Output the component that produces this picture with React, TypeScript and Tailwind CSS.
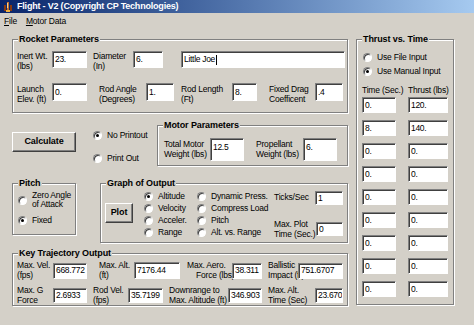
import React from "react";

const inputCls =
  "bg-white border border-t-[#808080] border-l-[#808080] border-r-white border-b-white shadow-[inset_1px_1px_0_#404040] flex pl-[2px] text-[8.5px] tracking-[-0.3px] text-black overflow-hidden whitespace-nowrap shrink-0";

function Input({ className = "", value, top = false }: { className?: string; value: React.ReactNode; top?: boolean }) {
  return <div className={`${inputCls} ${top ? "items-start pt-[2px]" : "items-center"} ${className}`}>{value}</div>;
}

function Radio({ checked = false }: { checked?: boolean }) {
  return (
    <span className="w-[9px] h-[9px] rounded-full bg-white border border-t-[#808080] border-l-[#808080] border-r-white border-b-white shadow-[inset_1px_1px_0_#404040] flex items-center justify-center shrink-0">
      {checked && <span className="w-[3px] h-[3px] rounded-full bg-black" />}
    </span>
  );
}

function RadioItem({ checked = false, children, className = "" }: { checked?: boolean; children: React.ReactNode; className?: string }) {
  return (
    <div className={`flex items-center gap-[5px] whitespace-nowrap ${className}`}>
      <Radio checked={checked} />
      <span>{children}</span>
    </div>
  );
}

function Group({ title, className = "", children }: { title: string; className?: string; children?: React.ReactNode }) {
  return (
    <div className={`relative border border-[#808080] shadow-[inset_1px_1px_0_#fff,1px_1px_0_#fff] ${className}`}>
      <span className="absolute -top-[7px] left-[5px] bg-[#d4d0c8] px-[1px] text-[9px] font-bold leading-[12px] tracking-[-0.1px] whitespace-nowrap">
        {title}
      </span>
      {children}
    </div>
  );
}

function Button({ className = "", children }: { className?: string; children: React.ReactNode }) {
  return (
    <div
      className={`bg-[#d4d0c8] border border-t-white border-l-white border-r-[#404040] border-b-[#404040] shadow-[inset_-1px_-1px_0_#808080] flex items-center justify-center text-[9px] font-bold tracking-[-0.1px] shrink-0 ${className}`}
    >
      {children}
    </div>
  );
}

function Label({ className = "", children }: { className?: string; children: React.ReactNode }) {
  return <div className={`leading-[9.5px] whitespace-nowrap shrink-0 ${className}`}>{children}</div>;
}

export default function App() {
  const thrust: [string, string][] = [
    ["0.", "120."],
    ["8.", "140."],
    ["0.", "0."],
    ["0.", "0."],
    ["0.", "0."],
    ["0.", "0."],
    ["0.", "0."],
    ["0.", "0."],
    ["0.", "0."],
  ];
  return (
    <div className="w-[474px] h-[325px] bg-[#d4d0c8] overflow-hidden font-['Liberation_Sans',Arial,sans-serif] text-black text-[8.5px] tracking-[-0.2px]">
      {/* title bar */}
      <div className="h-[13px] bg-linear-to-r from-[#0a246a] to-[#a6caf0] flex items-center pl-[3px] gap-[4px]">
        <svg width="10" height="10" viewBox="0 0 10 10">
          <rect x="4" y="0" width="2" height="8" fill="#c8702a" />
          <rect x="1" y="3" width="2" height="6" fill="#8a3a10" />
          <rect x="7" y="3" width="2" height="6" fill="#8a3a10" />
          <rect x="3" y="8" width="4" height="2" fill="#f0b040" />
          <rect x="4" y="1" width="1" height="5" fill="#f4d090" />
        </svg>
        <span className="text-white font-bold text-[9px] tracking-[-0.2px] leading-[13px]">
          Flight - V2 (Copyright CP Technologies)
        </span>
      </div>
      {/* menu */}
      <div className="h-[16px] flex items-center pl-[4px] gap-[9px]">
        <span>
          <span className="underline">F</span>ile
        </span>
        <span>
          <span className="underline">M</span>otor Data
        </span>
      </div>

      {/* body */}
      <div className="flex pl-[12px] pt-[10px] gap-[8px]">
        {/* left column */}
        <div className="w-[336px] flex flex-col">
          <Group title="Rocket Parameters" className="w-[336px] h-[74px] pt-[11px] pl-[4px]">
            <div className="flex items-start">
              <Label className="w-[35px] pt-[1px]">
                Inert Wt.
                <br />
                (lbs)
              </Label>
              <Input className="w-[35px] h-[17px]" value="23." />
              <Label className="ml-[6px] w-[40px] pt-[1px]">
                Diameter
                <br />
                (In)
              </Label>
              <Input className="w-[30px] h-[17px]" value="6." />
              <Input
                className="ml-[18px] w-[164px] h-[17px]"
                value={
                  <>
                    Little Joe<span className="inline-block w-[1px] h-[10px] bg-black ml-[1px]" />
                  </>
                }
              />
            </div>
            <div className="flex items-start mt-[12px]">
              <Label className="w-[35px] pt-[2px]">
                Launch
                <br />
                Elev. (ft)
              </Label>
              <Input className="w-[35px] h-[18px]" value="0." />
              <Label className="ml-[12px] w-[47px] pt-[2px]">
                Rod Angle
                <br />
                (Degrees)
              </Label>
              <Input className="w-[28px] h-[18px]" value="1." />
              <Label className="ml-[7px] w-[51px] pt-[2px]">
                Rod Length
                <br />
                (Ft)
              </Label>
              <Input className="w-[25px] h-[18px]" value="8." />
              <Label className="ml-[12px] w-[46px] pt-[2px]">
                Fixed Drag
                <br />
                Coefficent
              </Label>
              <Input className="w-[28px] h-[18px]" value=".4" />
            </div>
          </Group>

          {/* calculate row */}
          <div className="flex mt-[12px] h-[41px]">
            <Button className="mt-[7px] w-[64px] h-[20px]">Calculate</Button>
            <div className="ml-[17px] flex flex-col pt-[5px]">
              <RadioItem checked className="h-[10px]">
                No Printout
              </RadioItem>
              <RadioItem className="h-[10px] mt-[13px]">Print Out</RadioItem>
            </div>
            <Group title="Motor Parameters" className="ml-auto w-[191px] h-[41px] pt-[12px] pl-[6px]">
              <div className="flex items-start">
                <Label className="w-[46px] pt-[2px]">
                  Total Motor
                  <br />
                  Weight (lbs)
                </Label>
                <Input className="w-[34px] h-[23px]" value="12.5" top />
                <Label className="ml-[12px] w-[47px] pt-[2px]">
                  Propellant
                  <br />
                  Weight (lbs)
                </Label>
                <Input className="w-[34px] h-[23px]" value="6." top />
              </div>
            </Group>
          </div>

          {/* pitch + graph row */}
          <div className="flex mt-[17px] items-start">
            <Group title="Pitch" className="w-[64px] h-[52px] pt-[7px] pl-[5px]">
              <div className="flex items-center gap-[5px] h-[18px]">
                <Radio />
                <span className="leading-[9px]">
                  Zero Angle
                  <br />
                  of Attack
                </span>
              </div>
              <RadioItem checked className="h-[10px] mt-[6px]">
                Fixed
              </RadioItem>
            </Group>
            <Group title="Graph of Output" className="ml-[24px] w-[248px] h-[60px] pt-[6px] pl-[4px] flex items-start">
              <Button className="mt-[13px] w-[28px] h-[20px]">Plot</Button>
              <div className="ml-[11px] w-[53px] flex flex-col">
                <RadioItem checked className="h-[12px]">Altitude</RadioItem>
                <RadioItem className="h-[12px]">Velocity</RadioItem>
                <RadioItem className="h-[12px]">Acceler.</RadioItem>
                <RadioItem className="h-[12px]">Range</RadioItem>
              </div>
              <div className="w-[77px] flex flex-col">
                <RadioItem className="h-[12px]">Dynamic Press.</RadioItem>
                <RadioItem className="h-[12px]">Compress Load</RadioItem>
                <RadioItem className="h-[12px]">Pitch</RadioItem>
                <RadioItem className="h-[12px]">Alt. vs. Range</RadioItem>
              </div>
              <div className="w-[69px] flex flex-col mt-[1px]">
                <div className="flex items-center">
                  <Label className="w-[41px]">Ticks/Sec</Label>
                  <Input className="w-[28px] h-[14px]" value="1" />
                </div>
                <div className="flex items-center mt-[14px]">
                  <Label className="w-[42px] pt-[1px]">
                    Max. Plot
                    <br />
                    Time (Sec.)
                  </Label>
                  <Input className="w-[27px] h-[14px] relative" value="0" />
                </div>
              </div>
            </Group>
          </div>

          {/* key trajectory output */}
          <Group title="Key Trajectory Output" className="mt-[10px] w-[336px] h-[53px] pt-[7px] pl-[4px]">
            <div className="flex items-center">
              <Label className="w-[36px]">
                Max. Vel.
                <br />
                (fps)
              </Label>
              <Input className="w-[34px] h-[16px]" value="668.772" />
              <Label className="ml-[12px] w-[35px]">
                Max. Alt.
                <br />
                (ft)
              </Label>
              <Input className="w-[46px] h-[17px]" value="7176.44" />
              <Label className="ml-[7px] w-[45px]">
                Max. Aero.
                <br />
                <span className="pl-[9px]">Force (lbs)</span>
              </Label>
              <Input className="w-[30px] h-[16px]" value="38.311" />
              <Label className="ml-[6px] w-[30px]">
                Ballistic
                <br />
                Impact (ft)
              </Label>
              <Input className="w-[45px] h-[16px] relative" value="751.6707" />
            </div>
            <div className="flex items-center mt-[6px]">
              <Label className="w-[36px]">
                Max. G
                <br />
                Force
              </Label>
              <Input className="w-[34px] h-[15px]" value="2.6933" />
              <Label className="ml-[6px] w-[35px]">
                Rod Vel.
                <br />
                (fps)
              </Label>
              <Input className="w-[35px] h-[15px]" value="35.7199" />
              <Label className="ml-[6px] w-[59px]">
                Downrange to
                <br />
                Max. Altitude (ft)
              </Label>
              <Input className="w-[34px] h-[15px]" value="346.903" />
              <Label className="ml-[6px] w-[47px]">
                Max. Alt.
                <br />
                Time (Sec)
              </Label>
              <Input className="w-[28px] h-[15px]" value="23.670" />
            </div>
          </Group>
        </div>

        {/* right column */}
        <Group title="Thrust vs. Time" className="w-[98px] h-[266px] pt-[12px] pl-[5px]">
          <RadioItem className="h-[10px] ml-[1px]">Use File Input</RadioItem>
          <RadioItem checked className="h-[10px] ml-[1px] mt-[4px]">
            Use Manual Input
          </RadioItem>
          <div className="flex h-[10px] items-center mt-[9px] whitespace-nowrap">
            <span className="w-[46px]">Time (Sec.)</span>
            <span>Thrust (lbs)</span>
          </div>
          <div className="grid grid-cols-[34px_40px] gap-x-[12px] gap-y-[7px] mt-[2px]">
            {thrust.map(([t, f], i) => (
              <React.Fragment key={i}>
                <Input className="w-[34px] h-[16px]" value={t} />
                <Input className="w-[40px] h-[16px]" value={f} />
              </React.Fragment>
            ))}
          </div>
        </Group>
      </div>
    </div>
  );
}
